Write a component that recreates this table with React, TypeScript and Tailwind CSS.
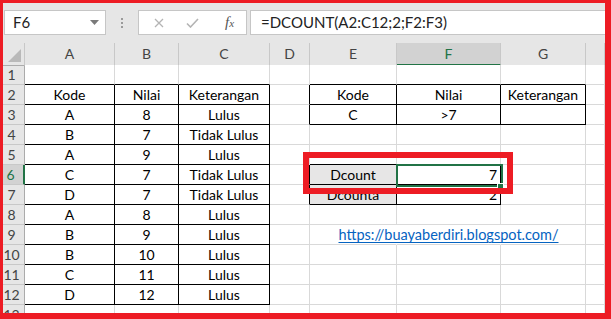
import { ReactNode } from "react";

type Cell = {
  v: string;
  align?: "left" | "center" | "right";
  fill?: boolean;
  link?: boolean;
};

const COLS = ["A", "B", "C", "D", "E", "F", "G", ""];
const ROWS = [1, 2, 3, 4, 5, 6, 7, 8, 9, 10, 11, 12, 13];

// sheet content keyed by address
const cells: Record<string, Cell> = {
  A2: { v: "Kode" },
  B2: { v: "Nilai" },
  C2: { v: "Keterangan" },
  E2: { v: "Kode" },
  F2: { v: "Nilai" },
  G2: { v: "Keterangan" },
  E3: { v: "C" },
  F3: { v: ">7" },
  G3: { v: "" },
  E6: { v: "Dcount", fill: true },
  F6: { v: "7", align: "right" },
  E7: { v: "Dcounta", fill: true },
  F7: { v: "2", align: "right" },
  F9: { v: "https://buayaberdiri.blogspot.com/", link: true },
};

const table1 = [
  ["A", "8", "Lulus"],
  ["B", "7", "Tidak Lulus"],
  ["A", "9", "Lulus"],
  ["C", "7", "Tidak Lulus"],
  ["D", "7", "Tidak Lulus"],
  ["A", "8", "Lulus"],
  ["B", "9", "Lulus"],
  ["B", "10", "Lulus"],
  ["C", "11", "Lulus"],
  ["D", "12", "Lulus"],
];
table1.forEach((row, i) => {
  row.forEach((v, j) => {
    cells[`${"ABC"[j]}${i + 3}`] = { v };
  });
});

// ranges that carry a thin black border
const boxed = (col: number, row: number) => {
  if (col >= 0 && col <= 2 && row >= 2 && row <= 12) return true;
  if (col >= 4 && col <= 6 && row >= 2 && row <= 3) return true;
  if (col >= 4 && col <= 5 && row >= 6 && row <= 7) return true;
  return false;
};

// the overflowing link hides these vertical gridlines
const hiddenRight = (col: number, row: number) =>
  row === 9 && (col === 4 || col === 5);

const gridCols =
  "grid grid-cols-[22px_90px_64px_91px_40px_87px_104px_85px_1fr]";

function SheetCell({ col, row }: { col: number; row: number }) {
  const cell = cells[`${COLS[col]}${row}`];
  const rightBlack = boxed(col, row) || boxed(col + 1, row);
  const bottomBlack = boxed(col, row) || boxed(col, row + 1);

  let content: ReactNode = null;
  if (cell?.link) {
    content = (
      <span className="absolute left-1/2 top-0 z-10 -translate-x-1/2 whitespace-nowrap text-[14.5px] text-[#0563c1] underline decoration-1 underline-offset-2">
        {cell.v}
      </span>
    );
  } else if (cell) {
    content = cell.v;
  }

  return (
    <div
      className={[
        "relative h-5 border-r border-b leading-[19px] whitespace-nowrap px-[3px]",
        rightBlack
          ? "border-r-black"
          : hiddenRight(col, row)
          ? "border-r-transparent"
          : "border-r-[#d9d9d9]",
        bottomBlack ? "border-b-black" : "border-b-[#d9d9d9]",
        cell?.fill ? "bg-[#e7e6e6]" : "bg-white",
        cell?.align === "right" ? "text-right" : "text-center",
      ].join(" ")}
    >
      {content}
    </div>
  );
}

function FormulaBar() {
  return (
    <div className="flex h-10 items-start bg-[#e6e6e6] pt-[7px] pl-[1px]">
      {/* name box */}
      <div className="flex h-[25px] w-[102px] items-center justify-between border border-[#c6c6c6] bg-white pl-[8px] pr-[6px] text-[15px] text-[#222]">
        <span>F6</span>
        <svg width="9" height="5" viewBox="0 0 9 5">
          <path d="M0 0h9L4.5 5z" fill="#7a7a7a" />
        </svg>
      </div>
      {/* splitter dots */}
      <div className="flex h-[25px] w-[32px] flex-col items-center justify-center gap-[2px]">
        <span className="h-[2px] w-[2px] bg-[#9a9a9a]" />
        <span className="h-[2px] w-[2px] bg-[#9a9a9a]" />
        <span className="h-[2px] w-[2px] bg-[#9a9a9a]" />
      </div>
      {/* cancel / enter / fx */}
      <div className="flex h-[25px] w-[109px] items-center border border-[#c6c6c6] bg-white">
        <svg className="ml-[15px]" width="10" height="10" viewBox="0 0 10 10">
          <path d="M1 1l8 8M9 1l-8 8" stroke="#b4b4b4" strokeWidth="1.3" />
        </svg>
        <svg className="ml-[22px]" width="13" height="10" viewBox="0 0 13 10">
          <path d="M1 5.5l3.5 3.5L12 1" stroke="#b4b4b4" strokeWidth="1.6" fill="none" />
        </svg>
        <span className="ml-[26px] font-['Liberation_Serif',serif] text-[15px] italic leading-none text-[#555]">
          f<span className="text-[11px]">x</span>
        </span>
      </div>
      {/* formula input */}
      <div className="ml-[3px] flex h-[25px] flex-1 items-center border border-r-0 border-[#c6c6c6] bg-white pl-[10px] text-[15px] text-[#222]">
        =DCOUNT(A2:C12;2;F2:F3)
      </div>
    </div>
  );
}

function ColumnHeaders() {
  return (
    <div className={`${gridCols} h-[22px] bg-[#e6e6e6] text-[#444]`}>
      <div className="relative border-r border-b border-r-[#c8c8c8] border-b-[#ababab]">
        <svg className="absolute right-[3px] bottom-[3px]" width="13" height="13" viewBox="0 0 13 13">
          <path d="M13 0v13H0z" fill="#b9b9b9" />
        </svg>
      </div>
      {COLS.map((c, i) =>
        c === "F" ? (
          <div
            key={i}
            className="border-r border-r-[#c8c8c8] border-b-2 border-b-[#217346] bg-[#d2d2d2] text-center leading-[21px] text-[#217346]"
          >
            {c}
          </div>
        ) : (
          <div
            key={i}
            className="border-r border-b border-r-[#c8c8c8] border-b-[#ababab] text-center leading-[21px]"
          >
            {c}
          </div>
        )
      )}
    </div>
  );
}

function RowHeader({ row }: { row: number }) {
  if (row === 6) {
    return (
      <div className="h-5 border-b border-b-[#c8c8c8] border-r-2 border-r-[#217346] bg-[#d2d2d2] pr-[5px] text-center leading-[19px] text-[#217346]">
        {row}
      </div>
    );
  }
  return (
    <div className="h-5 border-r border-b border-r-[#ababab] border-b-[#c8c8c8] bg-[#e6e6e6] pr-[4px] text-center leading-[19px] text-[#444]">
      {row}
    </div>
  );
}

export default function App() {
  return (
    <div className="relative h-[319px] w-[611px] overflow-hidden border-t-[3px] border-l-[3px] border-r-[6px] border-b-[6px] border-[#ed1c24] bg-white font-['Lato',sans-serif] text-[14px] text-black">
      <FormulaBar />
      <ColumnHeaders />
      {ROWS.map((r) => (
        <div key={r} className={gridCols}>
          <RowHeader row={r} />
          {COLS.map((_, c) => (
            <SheetCell key={c} col={c} row={r} />
          ))}
        </div>
      ))}

      {/* active cell F6 with fill handle */}
      <div className="absolute left-[393px] top-[161px] h-[23px] w-[107px] border-2 border-[#217346]" />
      <div className="absolute left-[494px] top-[180px] box-content h-[5px] w-[5px] border border-white bg-[#217346]" />

      {/* callout frame */}
      <div className="absolute left-[300px] top-[149px] h-[42px] w-[210px] border-[6px] border-[#ed1c24]" />
    </div>
  );
}
